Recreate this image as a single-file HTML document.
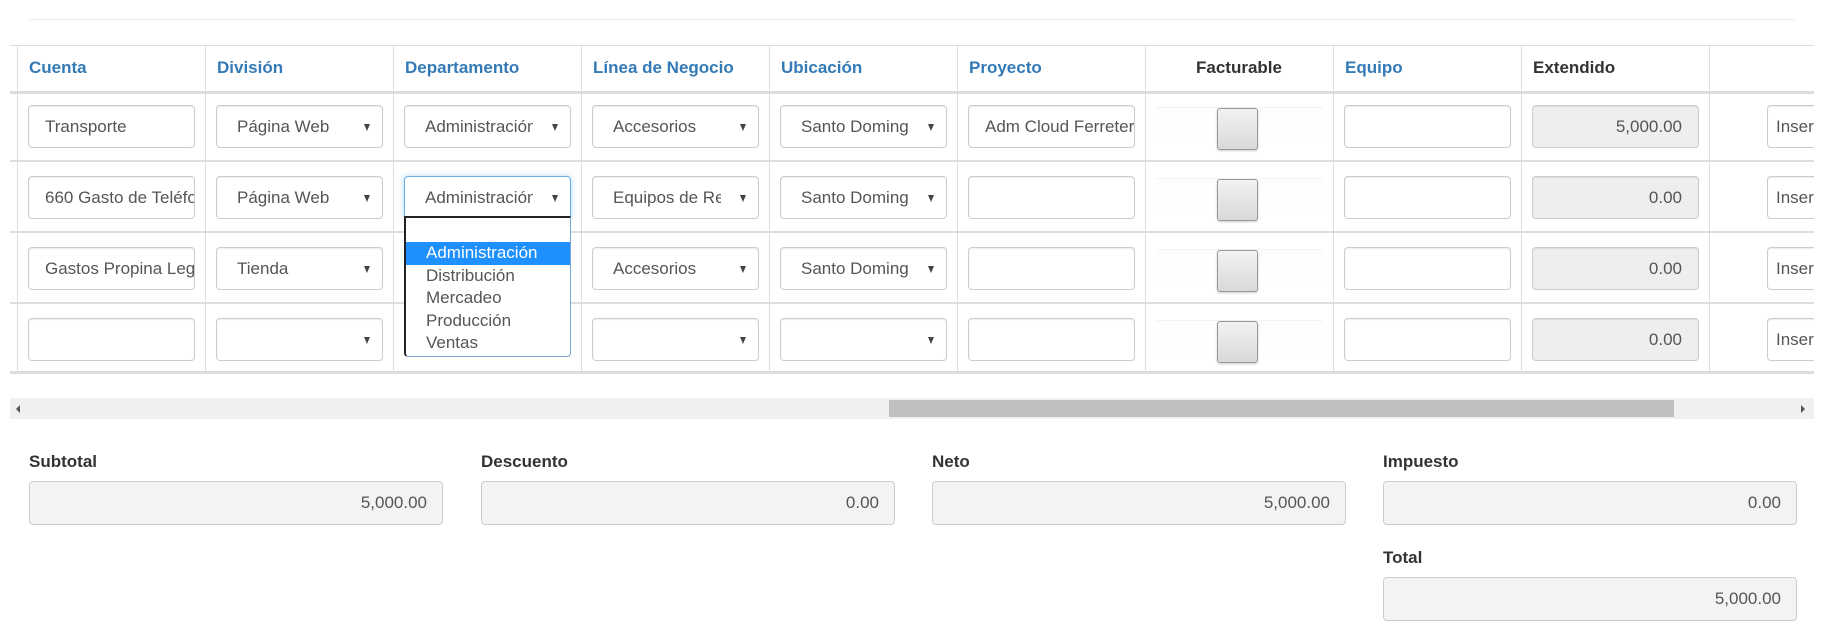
<!DOCTYPE html>
<html><head><meta charset="utf-8"><style>
*{box-sizing:border-box;margin:0;padding:0}
body{width:1847px;height:643px;background:#fff;font-family:"Liberation Sans",Arial,sans-serif;position:relative;overflow:hidden;color:#555}
.a{position:absolute}
.hl{background:#ddd}
.wrap{position:absolute;left:0;top:0;width:1814px;height:380px;overflow:hidden}
.th{position:absolute;top:58px;font-weight:bold;font-size:17px;color:#337ab7}
.in{position:absolute;height:43px;width:167px;border:1px solid #ccc;border-radius:4px;background:#fff;font-size:17px;line-height:41px;padding-left:16px;padding-right:14px;white-space:nowrap;overflow:hidden;box-shadow:inset 0 1px 1px rgba(0,0,0,.075)}
.sel{padding-left:20px}
.sel::after{content:"";position:absolute;right:12px;top:18px;border-left:3.5px solid transparent;border-right:3.5px solid transparent;border-top:7px solid #444}
.sel span{display:block;width:108px;overflow:hidden}
.ro{background:#eee;text-align:right;padding-right:16px}
.sw{position:absolute;width:167px;height:44px;border-top:1px solid #f2f2f2;background:linear-gradient(#fdfdfd,#fff)}
.sw i{position:absolute;left:61px;top:0;width:41px;height:42px;border:1px solid #999;border-radius:3px;background:linear-gradient(#f2f2f2,#d9d9d9);box-shadow:0 1px 2px rgba(0,0,0,.2)}
.lb{position:absolute;font-weight:bold;font-size:17px;color:#333}
.sb{position:absolute;height:44px;width:414px;border:1px solid #ccc;border-radius:4px;background:#f3f3f3;text-align:right;padding-right:15px;font-size:17px;line-height:42px;color:#555}
</style></head><body>
<div class="a" style="left:28px;top:19px;width:1767px;height:1px;background:#eee"></div>
<div class="wrap">
<div class="a hl" style="left:10px;top:45px;width:1837px;height:1px"></div>
<div class="a hl" style="left:10px;top:91px;width:1837px;height:3px"></div>
<div class="a hl" style="left:10px;top:160px;width:1837px;height:2px"></div>
<div class="a hl" style="left:10px;top:231px;width:1837px;height:2px"></div>
<div class="a hl" style="left:10px;top:302px;width:1837px;height:2px"></div>
<div class="a hl" style="left:10px;top:371px;width:1837px;height:3px"></div>
<div class="a hl" style="left:17px;top:45px;width:1px;height:328px"></div>
<div class="a hl" style="left:205px;top:45px;width:1px;height:328px"></div>
<div class="a hl" style="left:393px;top:45px;width:1px;height:328px"></div>
<div class="a hl" style="left:581px;top:45px;width:1px;height:328px"></div>
<div class="a hl" style="left:769px;top:45px;width:1px;height:328px"></div>
<div class="a hl" style="left:957px;top:45px;width:1px;height:328px"></div>
<div class="a hl" style="left:1145px;top:45px;width:1px;height:328px"></div>
<div class="a hl" style="left:1333px;top:45px;width:1px;height:328px"></div>
<div class="a hl" style="left:1521px;top:45px;width:1px;height:328px"></div>
<div class="a hl" style="left:1709px;top:45px;width:1px;height:328px"></div>

<div class="th" style="left:29px">Cuenta</div>
<div class="th" style="left:217px">División</div>
<div class="th" style="left:405px">Departamento</div>
<div class="th" style="left:593px">Línea de Negocio</div>
<div class="th" style="left:781px">Ubicación</div>
<div class="th" style="left:969px">Proyecto</div>
<div class="th" style="left:1145px;width:188px;text-align:center;color:#333">Facturable</div>
<div class="th" style="left:1345px">Equipo</div>
<div class="th" style="left:1533px;color:#333">Extendido</div>

<div class="in" style="left:28px;top:105px">Transporte</div>
<div class="in sel" style="left:216px;top:105px"><span>Página Web</span></div>
<div class="in sel" style="left:404px;top:105px"><span>Administración</span></div>
<div class="in sel" style="left:592px;top:105px"><span>Accesorios</span></div>
<div class="in sel" style="left:780px;top:105px"><span>Santo Domingo</span></div>
<div class="in" style="left:968px;top:105px">Adm Cloud Ferretería</div>
<div class="sw" style="left:1156px;top:107px"><i></i></div>
<div class="in" style="left:1344px;top:105px"></div>
<div class="in ro" style="left:1532px;top:105px">5,000.00</div>
<div class="in" style="left:1767px;top:105px;padding-left:8px">Insert</div>

<div class="in" style="left:28px;top:176px">660 Gasto de Teléfono</div>
<div class="in sel" style="left:216px;top:176px"><span>Página Web</span></div>
<div class="in sel" style="left:404px;top:176px;border-color:#66afe9;box-shadow:0 0 6px rgba(102,175,233,.5)"><span>Administración</span></div>
<div class="in sel" style="left:592px;top:176px"><span>Equipos de Red</span></div>
<div class="in sel" style="left:780px;top:176px"><span>Santo Domingo</span></div>
<div class="in" style="left:968px;top:176px"></div>
<div class="sw" style="left:1156px;top:178px"><i></i></div>
<div class="in" style="left:1344px;top:176px"></div>
<div class="in ro" style="left:1532px;top:176px">0.00</div>
<div class="in" style="left:1767px;top:176px;padding-left:8px">Insert</div>

<div class="in" style="left:28px;top:247px">Gastos Propina Legal</div>
<div class="in sel" style="left:216px;top:247px"><span>Tienda</span></div>
<div class="in sel" style="left:592px;top:247px"><span>Accesorios</span></div>
<div class="in sel" style="left:780px;top:247px"><span>Santo Domingo</span></div>
<div class="in" style="left:968px;top:247px"></div>
<div class="sw" style="left:1156px;top:249px"><i></i></div>
<div class="in" style="left:1344px;top:247px"></div>
<div class="in ro" style="left:1532px;top:247px">0.00</div>
<div class="in" style="left:1767px;top:247px;padding-left:8px">Insert</div>

<div class="in" style="left:28px;top:318px"></div>
<div class="in sel" style="left:216px;top:318px"><span></span></div>
<div class="in sel" style="left:592px;top:318px"><span></span></div>
<div class="in sel" style="left:780px;top:318px"><span></span></div>
<div class="in" style="left:968px;top:318px"></div>
<div class="sw" style="left:1156px;top:320px"><i></i></div>
<div class="in" style="left:1344px;top:318px"></div>
<div class="in ro" style="left:1532px;top:318px">0.00</div>
<div class="in" style="left:1767px;top:318px;padding-left:8px">Insert</div>

<div class="a" style="left:404px;top:216px;width:167px;height:141px;background:#fff;border:1px solid #7aa7d8;border-left:2px solid #222;border-top:2px solid #222;border-radius:0 0 4px 4px;font-size:17px;line-height:22.5px;color:#555">
<div style="height:24px"></div>
<div style="background:#1e90ff;color:#fff;padding-left:20px">Administración</div>
<div style="padding-left:20px">Distribución</div>
<div style="padding-left:20px">Mercadeo</div>
<div style="padding-left:20px">Producción</div>
<div style="padding-left:20px">Ventas</div>
</div>
</div>

<div class="a" style="left:10px;top:398px;width:1804px;height:21px;background:#f0f0f0"></div>
<div class="a" style="left:889px;top:400px;width:785px;height:17px;background:#c0c0c0"></div>
<div class="a" style="left:16px;top:405px;border-top:4px solid transparent;border-bottom:4px solid transparent;border-right:4px solid #555"></div>
<div class="a" style="left:1801px;top:405px;border-top:4px solid transparent;border-bottom:4px solid transparent;border-left:4px solid #555"></div>

<div class="lb" style="left:29px;top:452px">Subtotal</div>
<div class="lb" style="left:481px;top:452px">Descuento</div>
<div class="lb" style="left:932px;top:452px">Neto</div>
<div class="lb" style="left:1383px;top:452px">Impuesto</div>
<div class="sb" style="left:29px;top:481px">5,000.00</div>
<div class="sb" style="left:481px;top:481px">0.00</div>
<div class="sb" style="left:932px;top:481px">5,000.00</div>
<div class="sb" style="left:1383px;top:481px">0.00</div>
<div class="lb" style="left:1383px;top:548px">Total</div>
<div class="sb" style="left:1383px;top:577px">5,000.00</div>
</body></html>
